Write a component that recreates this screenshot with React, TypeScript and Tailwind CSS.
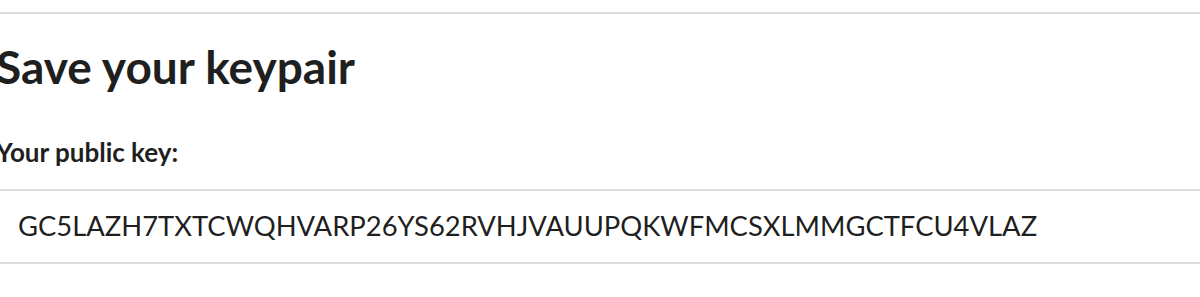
export default function App() {
  return (
    <div className="w-[1200px] h-[297px] bg-white overflow-hidden text-[#1f1f1f]" style={{ fontFamily: "Lato, 'Noto Sans', sans-serif" }}>
      <div className="pt-[12px]">
        <div className="h-[2px] bg-[#dcdcdc]" />
        <h1 className="-ml-[4px] mt-[30px] text-[46px] leading-[46px] font-bold">Save your keypair</h1>
        <div className="-ml-[4px] mt-[49px] text-[26px] leading-[26px] font-bold">Your public key:</div>
        <div className="mt-[24px] h-[2px] bg-[#dcdcdc]" />
        <div className="pl-[18px] pb-[2px] h-[71px] flex items-center text-[27.4px] leading-[28px]">GC5LAZH7TXTCWQHVARP26YS62RVHJVAUUPQKWFMCSXLMMGCTFCU4VLAZ</div>
        <div className="h-[2px] bg-[#dcdcdc]" />
      </div>
    </div>
  );
}
